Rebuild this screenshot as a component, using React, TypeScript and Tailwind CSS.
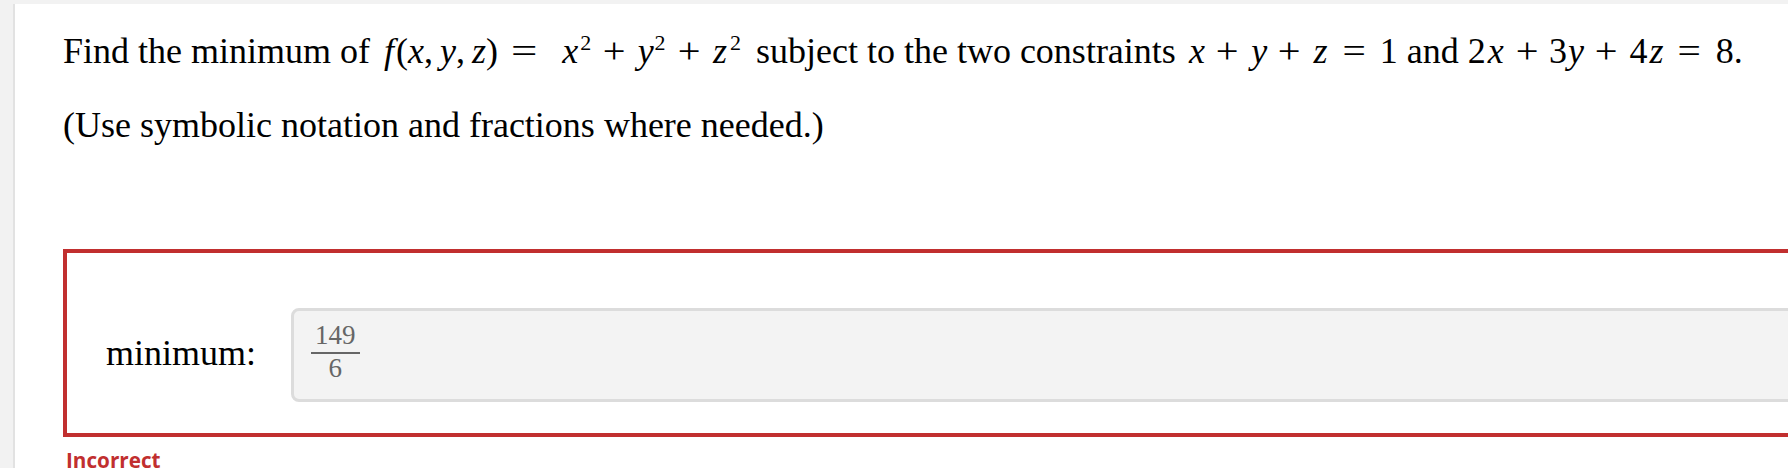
const serif = { fontFamily: '"Liberation Serif", "Times New Roman", serif' };

const V = ({ c, className = '' }: { c: string; className?: string }) => (
  <span className={'italic ' + className}>{c}</span>
);

export default function App() {
  return (
    <div className="w-[1788px] h-[468px] overflow-hidden bg-[#f2f2f2] pt-[4px] pl-[13px]">
      <div className="h-full bg-white border-l-2 border-[#e2e2e2] pl-[48px] pt-[22px] text-black" style={serif}>
        <p className="text-[36px] leading-[50px] whitespace-nowrap">
          Find the minimum of<span className="inline-block w-[9px]" />
          <V c="f" className="ml-[5px]" />
          <span className="ml-[2px]">(</span>
          <V c="x" />,
          <V c="y" className="ml-[7px]" />,
          <V c="z" className="ml-[7px]" />)
          <span className="inline-block ml-[16px] mr-[28px] scale-x-[1.3]">=</span>
          <V c="x" />
          <sup className="text-[22px] top-[-13px] ml-[2px]">2</sup>
          <span className="inline-block ml-[13px] mr-[13px] scale-x-[1.12]">+</span>
          <V c="y" />
          <sup className="text-[22px] top-[-13px] ml-[1px]">2</sup>
          <span className="inline-block ml-[13px] mr-[14px] scale-x-[1.12]">+</span>
          <V c="z" />
          <sup className="text-[22px] top-[-13px] ml-[3px] mr-[6px]">2</sup> subject to the two constraints{' '}
          <V c="x" className="ml-[4px]" />
          <span className="inline-block ml-[12px] mr-[14px] scale-x-[1.12]">+</span>
          <V c="y" />
          <span className="inline-block ml-[12px] mr-[14px] scale-x-[1.12]">+</span>
          <V c="z" />
          <span className="inline-block ml-[17px] mr-[15px] scale-x-[1.15]">=</span>1 and 2
          <V c="x" className="ml-[2px]" />
          <span className="inline-block ml-[13px] mr-[12px] scale-x-[1.12]">+</span>3
          <V c="y" className="ml-[1px]" />
          <span className="inline-block ml-[12px] mr-[13px] scale-x-[1.12]">+</span>4
          <V c="z" className="ml-[2px]" />
          <span className="inline-block ml-[16px] mr-[16px] scale-x-[1.15]">=</span>8.
        </p>
        <p className="mt-[24px] text-[36px] leading-[50px] whitespace-nowrap">
          (Use symbolic notation and fractions where needed.)
        </p>

        <div className="mt-[99px] w-[1790px] h-[188px] border-4 border-[#c12f2f] pt-[55px] pl-[39px]">
          <div className="flex items-center">
            <span className="w-[185px] text-[36px] leading-[50px] mb-[4px]">minimum:</span>
            <div className="flex-1 h-[94px] border-[3px] border-[#dcdcdc] bg-[#f3f3f3] rounded-[8px] pl-[17px] pt-[11px]">
              <div className="inline-flex flex-col items-center text-[27px] leading-[27px] text-[#666666]">
                <span className="px-[4px]">149</span>
                <span className="block w-full h-[2px] bg-[#666666] mt-[3px]" />
                <span className="mt-[1px]">6</span>
              </div>
            </div>
          </div>
        </div>

        <div
          className="mt-[9px] pl-[3px] text-[20.7px] leading-[29px] font-bold text-[#c12f2f]"
          style={{ fontFamily: '"Open Sans", "Noto Sans", sans-serif' }}
        >
          Incorrect
        </div>
      </div>
    </div>
  );
}
